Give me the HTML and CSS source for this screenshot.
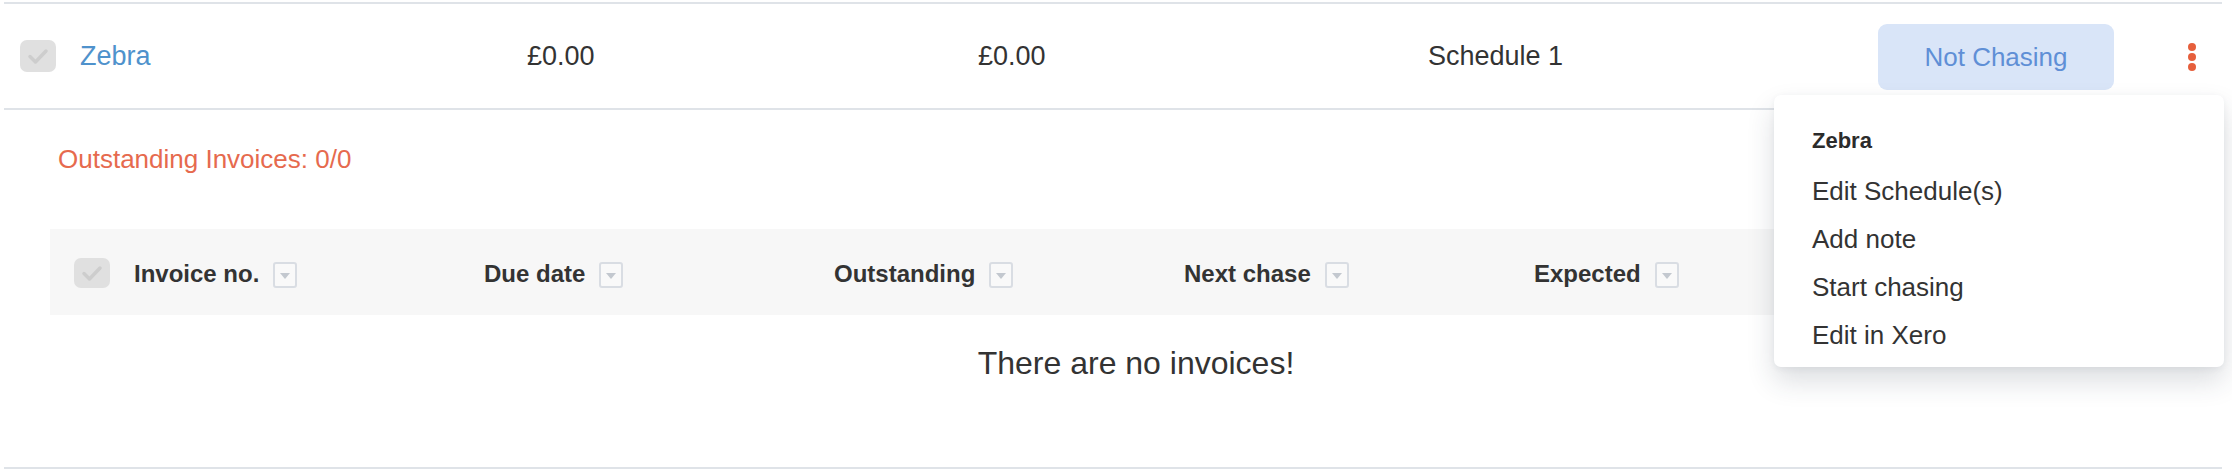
FILE: index.html
```html
<!DOCTYPE html>
<html>
<head>
<meta charset="utf-8">
<link rel="stylesheet" href="styles.css">
</head>
<body>
<div class="page">
  <div class="row">
    <div class="cell-check"><span class="check"><svg viewBox="0 0 36 32" width="36" height="32"><path d="M10 16.5l5.5 5.5 10.5-11" fill="none" stroke="#cdcdcd" stroke-width="3.5" stroke-linecap="round" stroke-linejoin="round"/></svg></span></div>
    <div class="cell name"><a class="link">Zebra</a></div>
    <div class="cell">£0.00</div>
    <div class="cell">£0.00</div>
    <div class="cell">Schedule 1</div>
    <div class="cell-btn"><span class="status-btn">Not Chasing</span></div>
    <div class="cell-kebab"><span class="kebab"><i></i><i></i><i></i></span></div>
  </div>

  <div class="details">
    <div class="outstanding">Outstanding Invoices: 0/0</div>
    <div class="inv-table">
      <div class="inv-head">
        <span class="check small"><svg viewBox="0 0 36 30" width="36" height="30"><path d="M10 15.5l5.5 5.5 10.5-11" fill="none" stroke="#cdcdcd" stroke-width="3.5" stroke-linecap="round" stroke-linejoin="round"/></svg></span>
        <div class="hcol"><span>Invoice no.</span><span class="sort"></span></div>
        <div class="hcol"><span>Due date</span><span class="sort"></span></div>
        <div class="hcol"><span>Outstanding</span><span class="sort"></span></div>
        <div class="hcol"><span>Next chase</span><span class="sort"></span></div>
        <div class="hcol"><span>Expected</span><span class="sort"></span></div>
      </div>
      <div class="empty">There are no invoices!</div>
    </div>
  </div>

  <div class="menu">
    <div class="menu-title">Zebra</div>
    <div class="menu-item">Edit Schedule(s)</div>
    <div class="menu-item">Add note</div>
    <div class="menu-item">Start chasing</div>
    <div class="menu-item">Edit in Xero</div>
  </div>
</div>
</body>
</html>
```

FILE: styles.css
```css
html, body {
  margin: 0;
  padding: 0;
  background: #ffffff;
}
body {
  font-family: "Liberation Sans", Arial, Helvetica, sans-serif;
  color: #333333;
}
.page {
  position: relative;
  width: 2218px;
  margin-left: 4px;
  padding-top: 2px;
}
.row {
  display: grid;
  grid-template-columns: 60px 447px 451px 450px 450px 236px 108px;
  align-items: center;
  height: 104px;
  padding-left: 16px;
  border-top: 2px solid #dfe3e8;
  border-bottom: 2px solid #dfe3e8;
  font-size: 27px;
  color: #333;
}
.check {
  display: block;
  width: 36px;
  height: 32px;
  background: #e0e0e0;
  border-radius: 7px;
}
.check svg { display: block; }
.check.small {
  height: 30px;
  flex: none;
}
.link {
  color: #4f92cc;
}
.cell-btn {
  display: flex;
}
.status-btn {
  display: flex;
  align-items: center;
  justify-content: center;
  width: 236px;
  height: 66px;
  margin-top: 2px;
  background: #d9e5f8;
  border-radius: 9px;
  color: #5f8fd6;
  font-size: 26px;
}
.cell-kebab {
  padding-left: 74px;
}
.kebab {
  display: flex;
  flex-direction: column;
  gap: 2px;
  width: 9px;
  margin-top: 2px;
}
.kebab i {
  display: block;
  width: 8px;
  height: 8px;
  border-radius: 50%;
  background: #e65f3c;
}
.details {
  border-bottom: 2px solid #dfe3e8;
}
.outstanding {
  color: #e66a4e;
  font-size: 26px;
  line-height: 30px;
  padding: 34px 0 0 54px;
  height: 85px;
}
.inv-table {
  margin-left: 46px;
}
.inv-head {
  display: flex;
  align-items: center;
  height: 86px;
  box-sizing: border-box;
  padding-top: 4px;
  background: #f7f7f7;
  padding-left: 24px;
  font-size: 24px;
  font-weight: bold;
  color: #333;
}
.inv-head .check {
  margin-right: 24px;
  margin-top: -2px;
}
.hcol {
  display: flex;
  align-items: center;
  width: 350px;
  flex: none;
  gap: 14px;
}
.sort {
  position: relative;
  display: block;
  width: 20px;
  height: 22px;
  margin-top: 2px;
  border: 2px solid #d9dde3;
  border-radius: 3px;
  background: #f9f9f9;
}
.sort::after {
  content: "";
  position: absolute;
  left: 5px;
  top: 9px;
  border-left: 5px solid transparent;
  border-right: 5px solid transparent;
  border-top: 6px solid #c3c8cf;
}
.empty {
  height: 152px;
  box-sizing: border-box;
  padding-top: 28px;
  line-height: 40px;
  text-align: center;
  font-size: 32px;
  color: #333;
}
.menu {
  position: absolute;
  left: 1770px;
  top: 95px;
  width: 450px;
  box-sizing: border-box;
  padding: 31px 0 8px 38px;
  background: #ffffff;
  border-radius: 7px;
  box-shadow: 0 14px 28px rgba(40, 50, 70, 0.16), 0 2px 6px rgba(40, 50, 70, 0.06);
}
.menu-title {
  font-size: 22px;
  font-weight: bold;
  line-height: 30px;
  height: 30px;
  margin-bottom: 11px;
  color: #2b2b2b;
}
.menu-item {
  font-size: 26px;
  line-height: 48px;
  color: #333;
}
```
